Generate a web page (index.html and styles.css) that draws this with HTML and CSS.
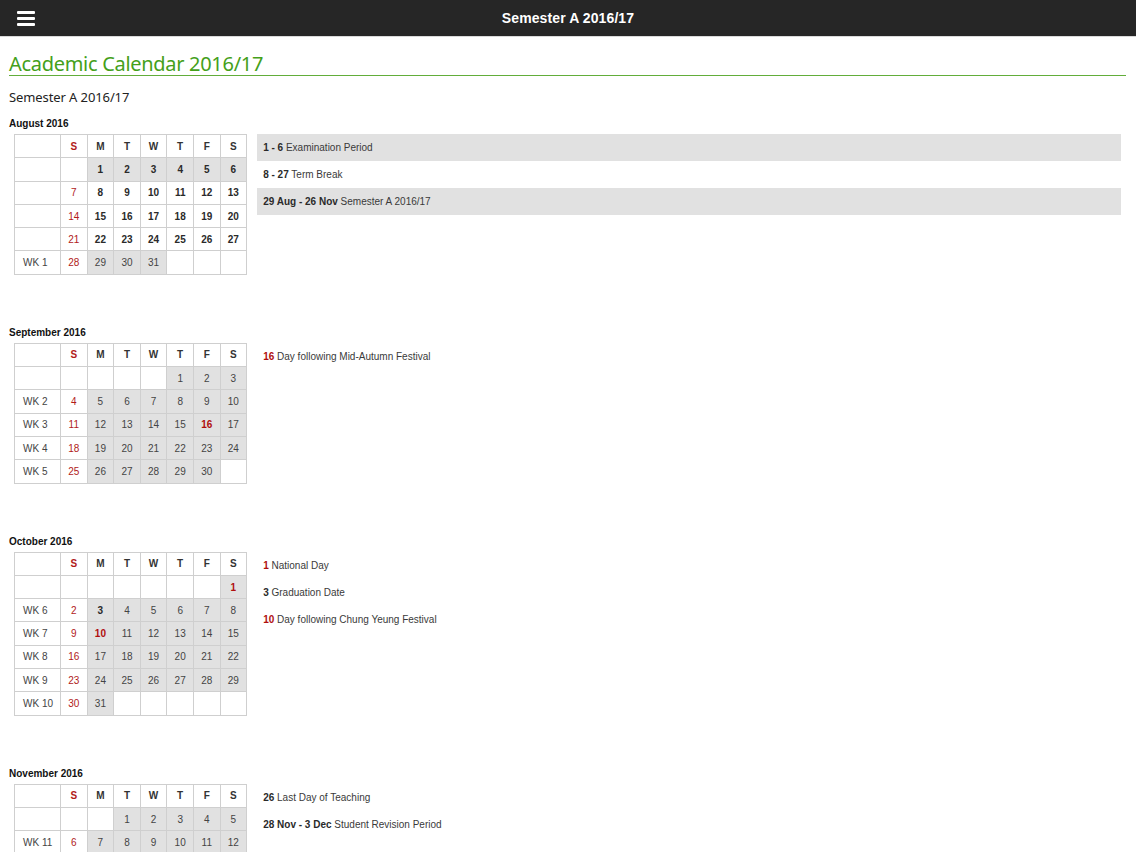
FILE: index.html
```html
<!DOCTYPE html>
<html>
<head>
<meta charset="utf-8">
<link rel="stylesheet" href="styles.css">
</head>
<body>
<header class="topbar">
  <button class="menu-btn" aria-label="Menu">
    <svg width="18" height="16" viewBox="0 0 18 16"><rect x="0" y="1" width="18" height="3" rx="1" fill="#fff"/><rect x="0" y="7" width="18" height="3" rx="1" fill="#fff"/><rect x="0" y="13" width="18" height="3" rx="1" fill="#fff"/></svg>
  </button>
  <div class="topbar-title">Semester A 2016/17</div>
</header>
<main class="content">
  <h1 class="page-title">Academic Calendar 2016/17</h1>
  <h2 class="sem-title">Semester A 2016/17</h2>

  <section class="month">
    <h3 class="month-title">August 2016</h3>
    <div class="month-body">
      <table class="cal">
        <tr class="hd"><td class="wk"></td><td class="sun">S</td><td>M</td><td>T</td><td>W</td><td>T</td><td>F</td><td>S</td></tr>
        <tr><td class="wk"></td><td></td><td class="g b">1</td><td class="g b">2</td><td class="g b">3</td><td class="g b">4</td><td class="g b">5</td><td class="g b">6</td></tr>
        <tr><td class="wk"></td><td class="sun">7</td><td class="b">8</td><td class="b">9</td><td class="b">10</td><td class="b">11</td><td class="b">12</td><td class="b">13</td></tr>
        <tr><td class="wk"></td><td class="sun">14</td><td class="b">15</td><td class="b">16</td><td class="b">17</td><td class="b">18</td><td class="b">19</td><td class="b">20</td></tr>
        <tr><td class="wk"></td><td class="sun">21</td><td class="b">22</td><td class="b">23</td><td class="b">24</td><td class="b">25</td><td class="b">26</td><td class="b">27</td></tr>
        <tr><td class="wk">WK 1</td><td class="sun">28</td><td class="g">29</td><td class="g">30</td><td class="g">31</td><td></td><td></td><td></td></tr>
      </table>
      <ul class="events">
        <li class="shade"><b>1 - 6</b> Examination Period</li>
        <li><b>8 - 27</b> Term Break</li>
        <li class="shade"><b>29 Aug - 26 Nov</b> Semester A 2016/17</li>
      </ul>
    </div>
  </section>

  <section class="month">
    <h3 class="month-title">September 2016</h3>
    <div class="month-body">
      <table class="cal">
        <tr class="hd"><td class="wk"></td><td class="sun">S</td><td>M</td><td>T</td><td>W</td><td>T</td><td>F</td><td>S</td></tr>
        <tr><td class="wk"></td><td></td><td></td><td></td><td></td><td class="g">1</td><td class="g">2</td><td class="g">3</td></tr>
        <tr><td class="wk">WK 2</td><td class="sun">4</td><td class="g">5</td><td class="g">6</td><td class="g">7</td><td class="g">8</td><td class="g">9</td><td class="g">10</td></tr>
        <tr><td class="wk">WK 3</td><td class="sun">11</td><td class="g">12</td><td class="g">13</td><td class="g">14</td><td class="g">15</td><td class="g hol">16</td><td class="g">17</td></tr>
        <tr><td class="wk">WK 4</td><td class="sun">18</td><td class="g">19</td><td class="g">20</td><td class="g">21</td><td class="g">22</td><td class="g">23</td><td class="g">24</td></tr>
        <tr><td class="wk">WK 5</td><td class="sun">25</td><td class="g">26</td><td class="g">27</td><td class="g">28</td><td class="g">29</td><td class="g">30</td><td></td></tr>
      </table>
      <ul class="events">
        <li><b class="red">16</b> Day following Mid-Autumn Festival</li>
      </ul>
    </div>
  </section>

  <section class="month">
    <h3 class="month-title">October 2016</h3>
    <div class="month-body">
      <table class="cal">
        <tr class="hd"><td class="wk"></td><td class="sun">S</td><td>M</td><td>T</td><td>W</td><td>T</td><td>F</td><td>S</td></tr>
        <tr><td class="wk"></td><td></td><td></td><td></td><td></td><td></td><td></td><td class="g hol">1</td></tr>
        <tr><td class="wk">WK 6</td><td class="sun">2</td><td class="g b">3</td><td class="g">4</td><td class="g">5</td><td class="g">6</td><td class="g">7</td><td class="g">8</td></tr>
        <tr><td class="wk">WK 7</td><td class="sun">9</td><td class="g hol">10</td><td class="g">11</td><td class="g">12</td><td class="g">13</td><td class="g">14</td><td class="g">15</td></tr>
        <tr><td class="wk">WK 8</td><td class="sun">16</td><td class="g">17</td><td class="g">18</td><td class="g">19</td><td class="g">20</td><td class="g">21</td><td class="g">22</td></tr>
        <tr><td class="wk">WK 9</td><td class="sun">23</td><td class="g">24</td><td class="g">25</td><td class="g">26</td><td class="g">27</td><td class="g">28</td><td class="g">29</td></tr>
        <tr><td class="wk">WK 10</td><td class="sun">30</td><td class="g">31</td><td></td><td></td><td></td><td></td><td></td></tr>
      </table>
      <ul class="events">
        <li><b class="red">1</b> National Day</li>
        <li><b>3</b> Graduation Date</li>
        <li><b class="red">10</b> Day following Chung Yeung Festival</li>
      </ul>
    </div>
  </section>

  <section class="month">
    <h3 class="month-title">November 2016</h3>
    <div class="month-body">
      <table class="cal">
        <tr class="hd"><td class="wk"></td><td class="sun">S</td><td>M</td><td>T</td><td>W</td><td>T</td><td>F</td><td>S</td></tr>
        <tr><td class="wk"></td><td></td><td></td><td class="g">1</td><td class="g">2</td><td class="g">3</td><td class="g">4</td><td class="g">5</td></tr>
        <tr><td class="wk">WK 11</td><td class="sun">6</td><td class="g">7</td><td class="g">8</td><td class="g">9</td><td class="g">10</td><td class="g">11</td><td class="g">12</td></tr>
        <tr><td class="wk">WK 12</td><td class="sun">13</td><td class="g">14</td><td class="g">15</td><td class="g">16</td><td class="g">17</td><td class="g">18</td><td class="g">19</td></tr>
        <tr><td class="wk">WK 13</td><td class="sun">20</td><td class="g">21</td><td class="g">22</td><td class="g">23</td><td class="g">24</td><td class="g">25</td><td class="g b">26</td></tr>
        <tr><td class="wk"></td><td class="sun">27</td><td class="b">28</td><td class="b">29</td><td class="b">30</td><td></td><td></td><td></td></tr>
      </table>
      <ul class="events">
        <li><b>26</b> Last Day of Teaching</li>
        <li><b>28 Nov - 3 Dec</b> Student Revision Period</li>
      </ul>
    </div>
  </section>
</main>
</body>
</html>
```

FILE: styles.css
```css
* { box-sizing: border-box; }
html, body { margin: 0; padding: 0; background: #fff; }
body { font-family: "Liberation Sans", Arial, sans-serif; color: #333; }

.topbar {
  height: 37px;
  background: #262626;
  border-bottom: 1px solid #d9d9d9;
  display: flex;
  align-items: center;
  justify-content: center;
  position: relative;
}
.menu-btn {
  position: absolute;
  left: 17px;
  top: 10px;
  padding: 0;
  border: 0;
  background: none;
  width: 18px;
  height: 16px;
  display: block;
}
.menu-btn svg { display: block; }
.topbar-title {
  color: #fff;
  font-weight: bold;
  font-size: 14px;
  letter-spacing: 0.1px;
}

.content { padding: 0 10px 40px 9px; }

.page-title {
  font-family: "Noto Sans", "Open Sans", sans-serif;
  font-weight: normal;
  color: #44a01a;
  font-size: 20px;
  letter-spacing: -0.3px;
  line-height: 22px;
  margin: 16px 0 0 0;
  border-bottom: 1px solid #62ad3a;
}
.sem-title {
  font-family: "Noto Sans", "Open Sans", sans-serif;
  font-weight: normal;
  color: #222;
  font-size: 13px;
  letter-spacing: -0.1px;
  line-height: 18px;
  margin: 12px 0 0 0;
}

.month { margin-bottom: 51px; }
.month-title {
  font-size: 10px;
  font-weight: bold;
  color: #111;
  margin: 11px 0 0 0;
  line-height: 14px;
}
.month-body {
  display: flex;
  align-items: flex-start;
  margin-top: 3px;
}

.cal {
  border-collapse: collapse;
  margin-left: 5px;
  font-size: 10px;
  table-layout: fixed;
  width: 232px;
  flex: none;
}
.cal td {
  border: 1px solid #cfcfcf;
  height: 23.3px;
  padding: 0;
  text-align: center;
  color: #444;
  width: 26.6px;
}
.cal td.wk {
  width: 46px;
  text-align: left;
  padding-left: 8px;
}
.cal tr.hd td { font-weight: bold; color: #333; }
.cal tr.hd td.sun { color: #b11a1a; }
.cal td.sun { color: #b11a1a; }
.cal td.g { background: #e1e1e1; }
.cal td.b { font-weight: bold; color: #2a2a2a; }
.cal td.hol { font-weight: bold; color: #b00e0e; }

.events {
  list-style: none;
  margin: 0 5px 0 10px;
  padding: 0;
  flex: 1;
  font-size: 10px;
  color: #3a3a3a;
}
.events li {
  height: 27px;
  line-height: 27px;
  padding-left: 6px;
}
.events li.shade { background: #e1e1e1; }
.events b { color: #2a2a2a; }
.events b.red { color: #b00e0e; }
```
